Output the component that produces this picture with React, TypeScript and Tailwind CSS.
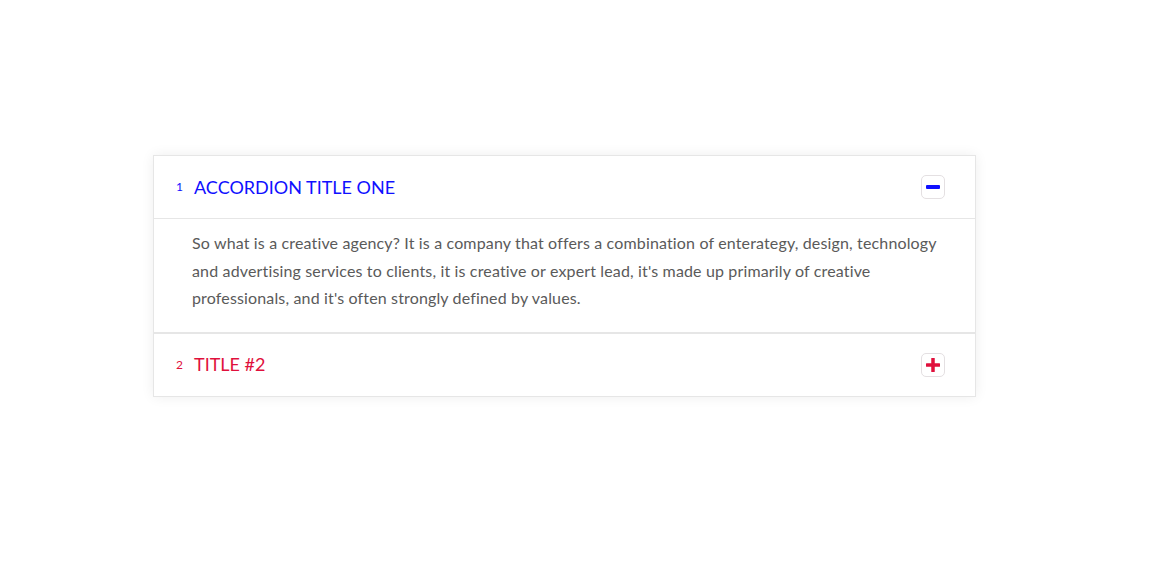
import React, { useState } from "react";

const items = [
  {
    title: "ACCORDION TITLE ONE",
    body: "So what is a creative agency? It is a company that offers a combination of enterategy, design, technology and advertising services to clients, it is creative or expert lead, it's made up primarily of creative professionals, and it's often strongly defined by values.",
  },
  {
    title: "TITLE #2",
    body: "So what is a creative agency? It is a company that offers a combination of enterategy, design, technology and advertising services to clients, it is creative or expert lead, it's made up primarily of creative professionals, and it's often strongly defined by values.",
  },
];

export default function App() {
  const [open, setOpen] = useState<number>(0);
  return (
    <div className="min-h-[565px] bg-white pt-[155px] pl-[153px] font-['Lato','Noto_Sans',sans-serif]">
      <div className="w-[823px] border border-[#e6e6e6] bg-white shadow-[0_0_12px_rgba(0,0,0,0.07)]">
        {items.map((it, i) => {
          const isOpen = open === i;
          return (
            <div key={i} className={i > 0 ? "border-t-2 border-[#e6e6e6]" : ""}>
              <button
                onClick={() => setOpen(isOpen ? -1 : i)}
                className="flex h-[62px] w-full items-center pl-[22px] pr-[30px] text-left"
              >
                <span
                  className={`w-[18px] text-[12px] ${isOpen ? "text-[#1010ff]" : "text-[#e0103c]"}`}
                >
                  {i + 1}
                </span>
                <span
                  className={`flex-1 text-[18px] ${isOpen ? "text-[#1010ff]" : "text-[#e0103c]"}`}
                >
                  {it.title}
                </span>
                <span className="flex h-[24px] w-[24px] items-center justify-center rounded-[5px] border border-[#e4e0e2] bg-white">
                  {isOpen ? (
                    <span className="block h-[4px] w-[14px] rounded-[1px] bg-[#1010ff]" />
                  ) : (
                    <svg width="14" height="14" viewBox="0 0 14 14">
                      <rect x="5.25" y="0" width="3.5" height="14" rx="0.5" fill="#e0103c" />
                      <rect x="0" y="5.25" width="14" height="3.5" rx="0.5" fill="#e0103c" />
                    </svg>
                  )}
                </span>
              </button>
              {isOpen && (
                <div className="border-t border-[#e6e6e6] pl-[38px] pr-[30px] pt-[10px] pb-[20px] text-[16px] leading-[27.5px] tracking-[0.15px] text-[#5a5a5a]">
                  {it.body}
                </div>
              )}
            </div>
          );
        })}
      </div>
    </div>
  );
}
